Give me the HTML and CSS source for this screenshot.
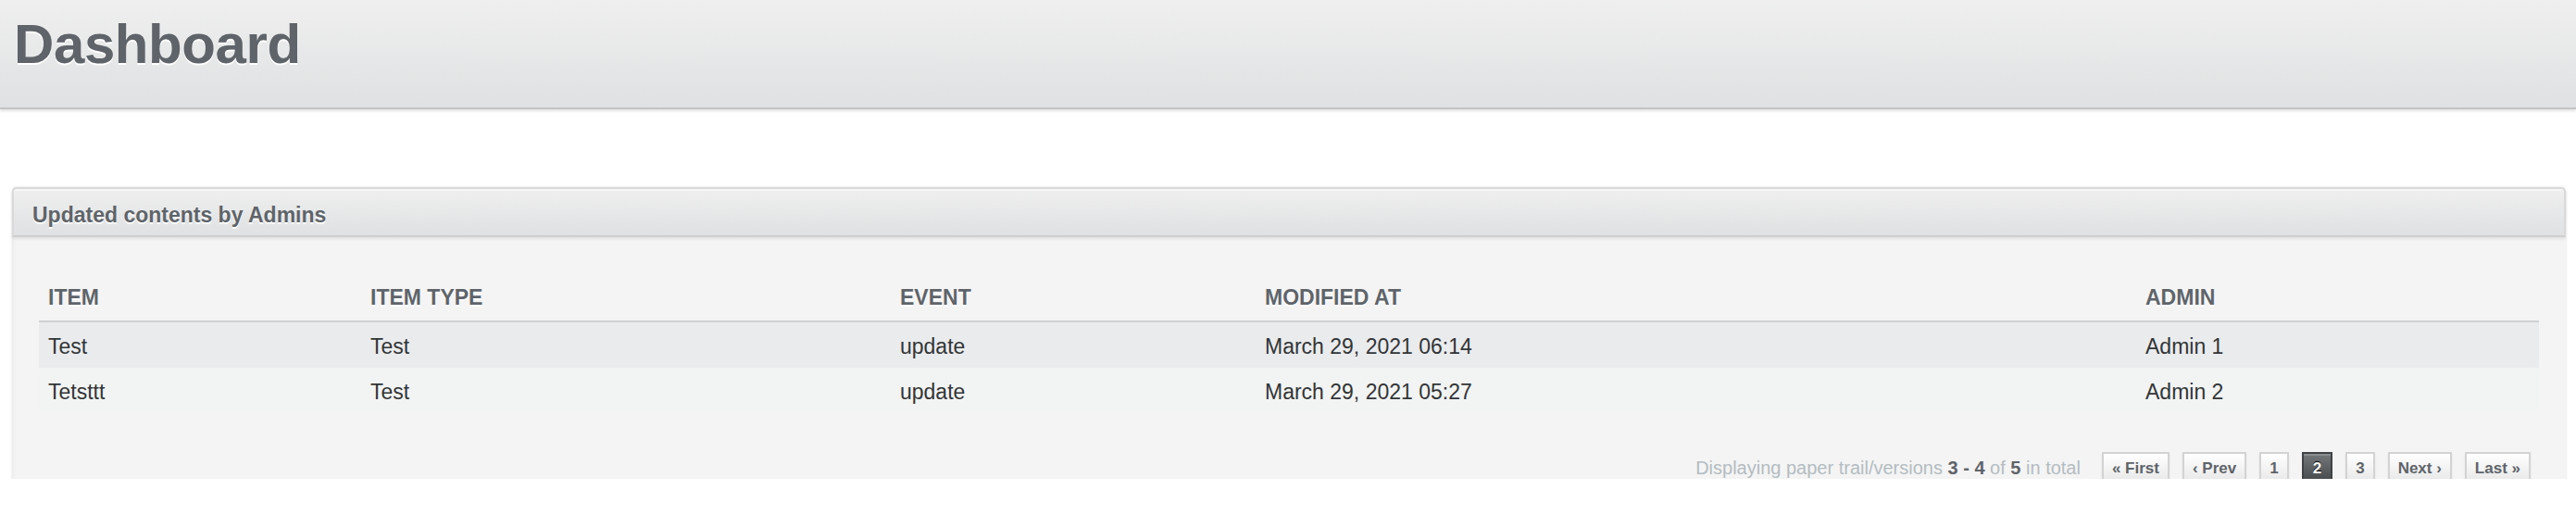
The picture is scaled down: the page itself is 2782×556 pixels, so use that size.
FILE: index.html
```html
<!DOCTYPE html>
<html lang="en">
<head>
    <meta charset="UTF-8">
    <title>Dashboard</title>
    <link rel="stylesheet" href="styles.css">
</head>
<body>

<div class="title-bar">
    <h2>Dashboard</h2>
</div>

<div class="main">
    <div class="panel">
        <h3>Updated contents by Admins</h3>
        <div class="panel-body">
            <table class="versions">
                <colgroup>
                    <col class="c-item"><col class="c-type"><col class="c-event"><col class="c-date"><col class="c-admin">
                </colgroup>
                <thead>
                    <tr><th>Item</th><th>Item Type</th><th>Event</th><th>Modified At</th><th>Admin</th></tr>
                </thead>
                <tbody>
                    <tr class="odd"><td>Test</td><td>Test</td><td>update</td><td>March 29, 2021 06:14</td><td>Admin 1</td></tr>
                    <tr class="even"><td>Tetsttt</td><td>Test</td><td>update</td><td>March 29, 2021 05:27</td><td>Admin 2</td></tr>
                </tbody>
            </table>
            <div class="table-footer">
                <span class="page-info">Displaying paper trail/versions <b>3&nbsp;-&nbsp;4</b> of <b>5</b> in total</span>
                <nav class="pagination">
                    <a href="#">&laquo; First</a>
                    <a href="#">&lsaquo; Prev</a>
                    <a href="#">1</a>
                    <span class="current">2</span>
                    <a href="#">3</a>
                    <a href="#">Next &rsaquo;</a>
                    <a href="#">Last &raquo;</a>
                </nav>
            </div>
        </div>
    </div>
</div>

</body>
</html>
```

FILE: styles.css
```css
body { margin: 0; font-family: "Liberation Sans", Arial, sans-serif; font-size: 23px; color: #323537; background: #fff; }

/* top title bar */
.title-bar { height: 118px; box-sizing: border-box; padding: 18px 15px 0; background: linear-gradient(#efefef, #dfe1e2); border-bottom: 2px solid #c4c4c4; box-shadow: 0 2px 3px rgba(0,0,0,0.12); }
.title-bar h2 { margin: 0; font-size: 60px; line-height: 60px; font-weight: bold; color: #5e6469; text-shadow: 0 2px 0 #fff; letter-spacing: -0.4px; }

.main { padding: 84px 11px 0 13px; }

/* panel */
.panel { background: #f4f4f4; border-radius: 5px; box-shadow: 0 0 3px rgba(0,0,0,0.12), inset 2px 0 3px rgba(0,0,0,0.03); }
.panel h3 { margin: 0; height: 54px; box-sizing: border-box; padding: 15px 20px 9px; line-height: 26px; font-size: 23px; font-weight: bold; color: #5e6469; text-shadow: 0 2px 0 #fff; background: linear-gradient(#efefef, #dfe1e2); border: 2px solid #d9d9d9; border-bottom-color: #cfcfcf; border-radius: 5px 5px 0 0; box-shadow: inset 0 2px 0 #f6f6f6, 0 2px 3px rgba(0,0,0,0.08); }
.panel-body { padding: 30px 29px 0; }

/* table */
.versions { width: 100%; border-collapse: collapse; table-layout: fixed; }
.c-item { width: 348px; }
.c-type { width: 572px; }
.c-event { width: 394px; }
.c-date { width: 951px; }
.versions th { text-align: left; padding: 21px 10px 10px; line-height: 29px; font-weight: bold; text-transform: uppercase; color: #5e6469; text-shadow: 0 2px 0 #fff; border-bottom: 2px solid #cfd0d1; }
.versions td { padding: 12px 10px 8px; line-height: 29px; color: #323537; }
.versions tr.odd td { background: #eaebec; }
.versions tr.even td { background: #f2f3f3; }

/* footer + pagination */
.table-footer { display: flex; justify-content: flex-end; align-items: center; margin: 42px 9px -6px 0; height: 35px; }
.page-info { font-size: 20px; color: #b3bcc1; margin-right: 23px; }
.page-info b { color: #5e6469; }
.pagination { display: flex; gap: 14px; }
.pagination a, .pagination .current { display: block; height: 35px; box-sizing: border-box; padding: 0 9px; border: 2px solid #d3d3d3; line-height: 31px; font-size: 17px; font-weight: bold; color: #5e6469; text-decoration: none; background: linear-gradient(#ffffff, #e7e7e7); box-shadow: 0 2px 2px rgba(0,0,0,0.08); }
.pagination .current { color: #fff; background: linear-gradient(#74777a, #45484a); border-color: #3f4244; box-shadow: inset 0 2px 0 #8b8e90; text-shadow: 0 -1px 0 #000; padding: 0 10px; }
```
